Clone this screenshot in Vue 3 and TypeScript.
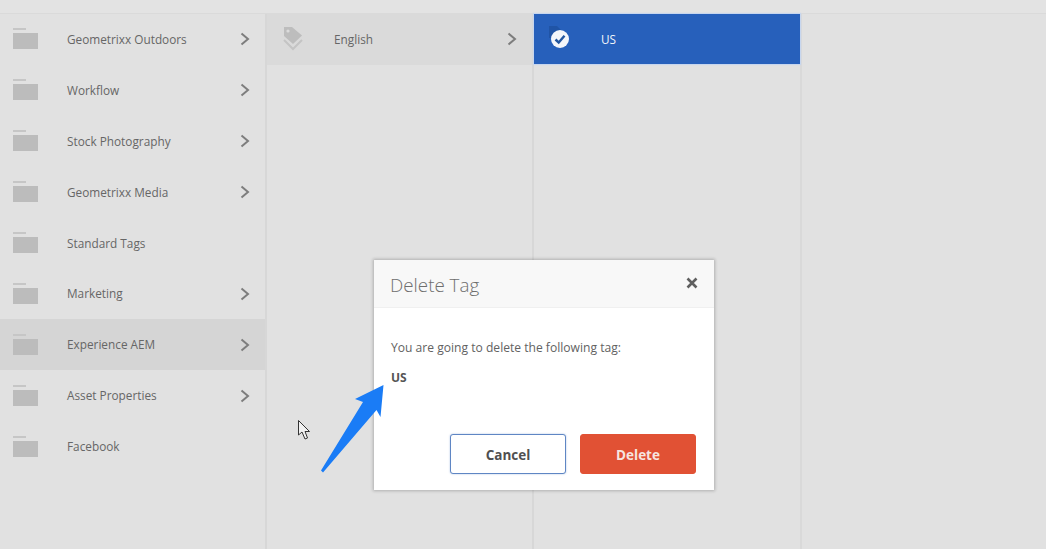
<script setup lang="ts">
interface Row { label: string; more: boolean; active?: boolean }
const rows: Row[] = [
  { label: 'Geometrixx Outdoors', more: true },
  { label: 'Workflow', more: true },
  { label: 'Stock Photography', more: true },
  { label: 'Geometrixx Media', more: true },
  { label: 'Standard Tags', more: false },
  { label: 'Marketing', more: true },
  { label: 'Experience AEM', more: true, active: true },
  { label: 'Asset Properties', more: true },
  { label: 'Facebook', more: false },
]
</script>

<template>
  <div class="page">
    <div class="topbar"></div>
    <div class="columns">
      <div class="col first">
        <div v-for="r in rows" :key="r.label" class="row" :class="{ active: r.active }">
          <svg class="folder" width="26" height="24" viewBox="0 0 26 24">
            <rect x="1" y="1" width="13" height="2" fill="#c6c6c6" />
            <rect x="1" y="6" width="25" height="16" fill="#bcbcbc" />
          </svg>
          <span class="label">{{ r.label }}</span>
          <svg v-if="r.more" class="chev" width="10" height="14" viewBox="0 0 10 14">
            <path d="M1.5 1.5 L8 7 L1.5 12.5" fill="none" stroke="#7d7d7d" stroke-width="2" />
          </svg>
        </div>
      </div>
      <div class="col second">
        <div class="row active soft">
          <svg class="tag" width="20" height="26" viewBox="0 0 20 26">
            <path d="M1 1 H9 L19 9.5 L10 18 L1 10 Z" fill="#bdbdbd" />
            <circle cx="5" cy="5" r="1.6" fill="#dcdcdc" />
            <path d="M1 14 L10 23 L19 14" fill="none" stroke="#c4c4c4" stroke-width="2" />
          </svg>
          <span class="label">English</span>
          <svg class="chev" width="10" height="14" viewBox="0 0 10 14">
            <path d="M1.5 1.5 L8 7 L1.5 12.5" fill="none" stroke="#7d7d7d" stroke-width="2" />
          </svg>
        </div>
      </div>
      <div class="col third">
        <div class="row selected">
          <span class="tick-wrap">
            <svg width="22" height="26" viewBox="0 0 22 26">
              <path d="M1 0 H9 L14 5 V12 H1 Z" fill="#2054a6" />
              <circle cx="12" cy="13" r="9" fill="#f4f6fa" />
              <path d="M7.5 13.5 L10.7 16.5 L16.5 9.8" fill="none" stroke="#23569f" stroke-width="2.4" />
            </svg>
          </span>
          <span class="label">US</span>
        </div>
      </div>
      <div class="col last"></div>
    </div>

    <div class="dialog">
      <div class="head">
        <span class="title">Delete Tag</span>
        <svg class="close" width="12" height="12" viewBox="0 0 12 12">
          <path d="M1.5 1.5 L10.5 10.5 M10.5 1.5 L1.5 10.5" stroke="#5f5f5f" stroke-width="2.6" />
        </svg>
      </div>
      <div class="body">
        <p class="msg">You are going to delete the following tag:</p>
        <p class="tagname">US</p>
      </div>
      <div class="foot">
        <button class="btn cancel">Cancel</button>
        <button class="btn delete">Delete</button>
      </div>
    </div>

    <svg class="overlay" width="1046" height="549" viewBox="0 0 1046 549">
      <path d="M383.5 385 L355 399 L363 402 L321 470.5 L323 472.5 L376.5 410 L380.5 417 Z" fill="#1a7cf6" />
      <path d="M298.5 420.5 V435 L302 432 L305 439 L307.5 438 L305 431.5 L309.5 431.5 Z" fill="#f2f2f2" stroke="#333" stroke-width="1" />
    </svg>
  </div>
</template>

<style>
body { margin: 0; }
</style>

<style scoped>
.page {
  position: relative;
  width: 1046px;
  height: 549px;
  overflow: hidden;
  background: #e1e1e1;
  font-family: "Open Sans", "Liberation Sans", sans-serif;
  display: flex;
  flex-direction: column;
}
.topbar {
  height: 13px;
  background: #e3e3e3;
  border-bottom: 1px solid #dadada;
  flex: none;
}
.columns { display: flex; flex: 1; min-height: 0; }
.col { display: flex; flex-direction: column; background: #e1e1e1; }
.first { width: 265px; border-right: 2px solid #d7d7d7; }
.second { width: 265px; border-right: 2px solid #d7d7d7; }
.third { width: 266px; border-right: 2px solid #d9d9d9; }
.last { flex: 1; }
.row {
  height: 50.9px;
  display: flex;
  align-items: center;
  flex: none;
  position: relative;
  color: #666;
  font-size: 11.8px;
}
.row.active { background: #d5d5d5; }
.row.soft { background: #dadada; }
.folder { margin-left: 12px; flex: none; }
.label { margin-left: 29px; flex: 1; padding-bottom: 1px; }
.chev { margin-right: 15px; flex: none; }
.tag { margin-left: 16px; flex: none; }
.second .label { margin-left: 31px; }
.selected { background: #2760bb; color: #f2f5fa; height: 50px; box-shadow: 0 0 1px 1px #c7d6ee; }
.tick-wrap { margin-left: 14px; display: flex; flex: none; }
.selected .label { margin-left: 31px; }
.dialog {
  position: absolute;
  left: 374px;
  top: 260px;
  width: 340px;
  height: 230px;
  background: #fff;
  box-shadow: 0 0 3px 1px rgba(0, 0, 0, 0.22);
  display: flex;
  flex-direction: column;
  color: #626262;
}
.head {
  height: 47px;
  flex: none;
  background: #f8f8f8;
  border-bottom: 1px solid #f0f0f0;
  display: flex;
  align-items: center;
  justify-content: space-between;
  padding: 0 16px;
}
.title { font-size: 18.8px; font-weight: 300; color: #6e6e6e; padding-top: 3px; }
.close { margin-bottom: 1px; }
.body { flex: 1; padding: 31px 17px 0; }
.msg { margin: 0; font-size: 12.1px; line-height: 17px; }
.tagname { margin: 13px 0 0; font-size: 12px; line-height: 17px; font-weight: 700; color: #555; }
.foot { display: flex; justify-content: flex-end; gap: 14px; padding: 0 18px 16px; }
.btn {
  width: 116px;
  height: 40px;
  border-radius: 3px;
  font-family: inherit;
  font-size: 13.5px;
  font-weight: 700;
  padding: 1px 0 0;
}
.cancel { background: #fff; border: 1px solid #5f86c4; color: #505050; box-shadow: 0 0 2px #a9bfe0; }
.delete { background: #e15134; border: 1px solid #e15134; color: #f6e6e0; }
.overlay { position: absolute; left: 0; top: 0; pointer-events: none; }
</style>
